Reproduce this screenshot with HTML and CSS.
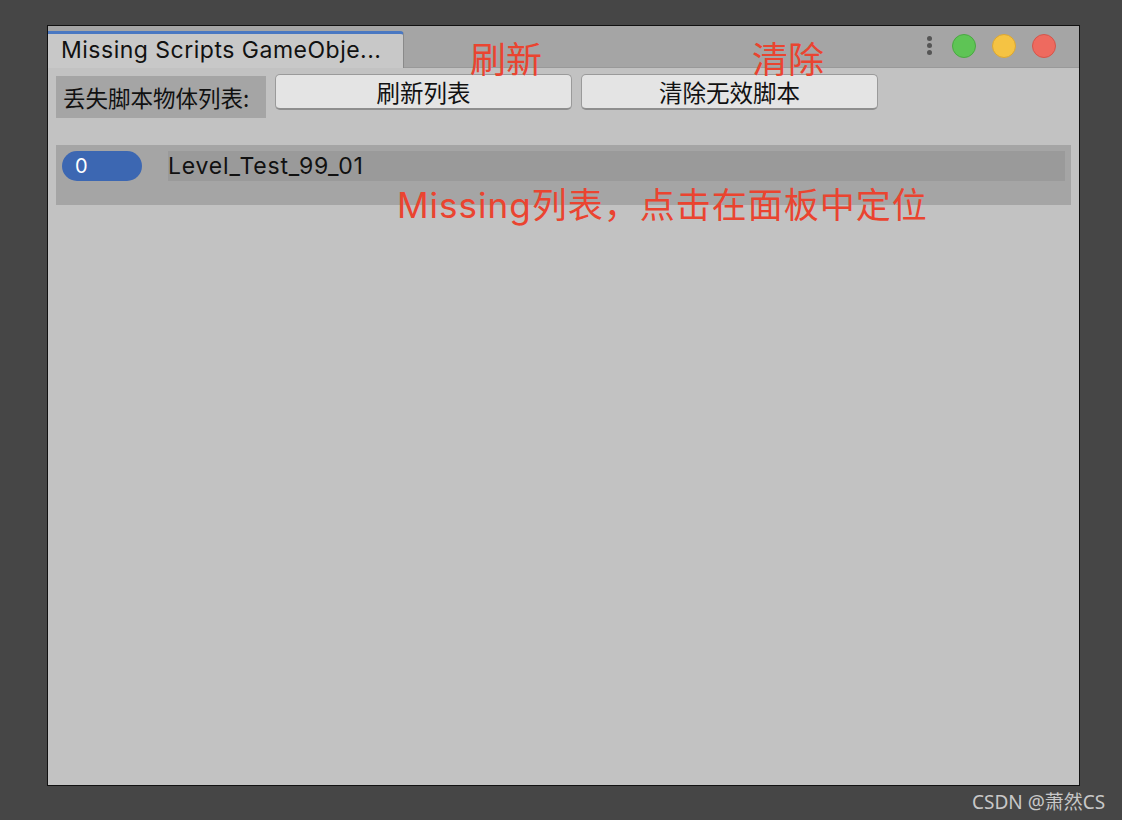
FILE: index.html
```html
<!DOCTYPE html>
<html>
<head>
<meta charset="utf-8">
<link rel="stylesheet" href="styles.css">
</head>
<body>
<div class="stage">
  <div class="window">
    <div class="titlebar">
      <div class="tab">Missing Scripts GameObje...</div>
      <div class="controls">
        <span class="kebab"><i></i><i></i><i></i></span>
        <span class="dot green"></span>
        <span class="dot yellow"></span>
        <span class="dot red"></span>
      </div>
    </div>
    <div class="content">
      <div class="toolbar">
        <div class="label">丢失脚本物体列表:</div>
        <button class="btn">刷新列表</button>
        <button class="btn">清除无效脚本</button>
      </div>
      <div class="list">
        <div class="row">
          <span class="pill">0</span>
          <span class="name">Level_Test_99_01</span>
        </div>
      </div>
    </div>
    <div class="note note-refresh">刷新</div>
    <div class="note note-clear">清除</div>
    <div class="note note-list">Missing列表，点击在面板中定位</div>
  </div>
  <div class="watermark">CSDN @萧然CS</div>
</div>
</body>
</html>
```
FILE: styles.css
```css
html, body {
  margin: 0;
  padding: 0;
  background: #464646;
  font-family: Inter, "Noto Sans CJK SC", sans-serif;
}
.stage {
  width: 1122px;
  height: 820px;
  position: relative;
  padding-top: 25px;
  padding-left: 47px;
  box-sizing: border-box;
}
.window {
  position: relative;
  width: 1033px;
  height: 761px;
  border: 1px solid #111;
  box-sizing: border-box;
  background: #c2c2c2;
  display: flex;
  flex-direction: column;
}
.titlebar {
  height: 42px;
  background: #a5a5a5;
  border-bottom: 1px solid #999;
  box-sizing: border-box;
  display: flex;
  align-items: flex-end;
  justify-content: space-between;
}
.tab {
  width: 356px;
  height: 37px;
  box-sizing: border-box;
  background: #c8c8c8;
  border-top: 3px solid #4a78c2;
  border-right: 1px solid #8a8a8a;
  border-top-right-radius: 4px;
  padding-left: 13px;
  font-size: 23px;
  letter-spacing: 0.5px;
  line-height: 32px;
  color: #111;
  margin-bottom: -1px;
  white-space: nowrap;
}
.controls {
  display: flex;
  align-items: center;
  align-self: center;
  gap: 16px;
  padding-right: 23px;
  margin-top: -2px;
}
.kebab {
  display: flex;
  flex-direction: column;
  gap: 2px;
  margin-right: 4px;
}
.kebab i {
  width: 5px;
  height: 5px;
  border-radius: 50%;
  background: #555;
  display: block;
}
.dot {
  width: 24px;
  height: 24px;
  border-radius: 50%;
  box-sizing: border-box;
}
.green { background: #5ec455; border: 1px solid #4aa842; }
.yellow { background: #f5c343; border: 1px solid #dba633; }
.red { background: #ee6a5f; border: 1px solid #d4554b; }
.content {
  flex: 1;
  padding: 6px 8px 0 8px;
}
.toolbar {
  display: flex;
  align-items: flex-start;
  gap: 9px;
}
.label {
  width: 210px;
  height: 42px;
  margin-top: 2px;
  background: #a5a5a5;
  font-family: "Noto Sans CJK SC", sans-serif;
  font-size: 22.5px;
  line-height: 42px;
  padding-left: 7px;
  box-sizing: border-box;
  color: #111;
  white-space: nowrap;
}
.btn {
  width: 297px;
  height: 36px;
  background: #e4e4e4;
  border: 1px solid #9a9a9a;
  border-bottom: 2px solid #8e8e8e;
  border-radius: 5px;
  font-family: "Noto Sans CJK SC", sans-serif;
  font-size: 23.5px;
  color: #111;
  padding: 0;
  line-height: 30px;
}
.list {
  margin-top: 27px;
  background: #a5a5a5;
  height: 60px;
  padding: 6px;
  box-sizing: border-box;
}
.row {
  display: flex;
  align-items: center;
  gap: 26px;
}
.pill {
  width: 80px;
  height: 30px;
  border-radius: 15px;
  background: #3c67b2;
  color: #fff;
  font-size: 20px;
  line-height: 30px;
  padding-left: 13px;
  box-sizing: border-box;
}
.name {
  flex: 1;
  height: 30px;
  background: #9a9a9a;
  font-size: 23px;
  letter-spacing: 0.8px;
  line-height: 30px;
  color: #111;
}
.note {
  position: absolute;
  color: #ea4430;
  font-family: "Noto Sans CJK SC", sans-serif;
  font-size: 36px;
  line-height: 28px;
  white-space: nowrap;
}
.note-refresh { left: 422px; top: 17px; }
.note-clear { left: 704px; top: 17px; }
.note-list { left: 349px; top: 165px; font-size: 35px; letter-spacing: 1px; font-family: Inter, "Noto Sans CJK SC", sans-serif; }
.watermark {
  position: absolute;
  left: 972px;
  top: 787px;
  color: #c8c8c8;
  font-size: 19px;
  font-family: "Noto Sans", "Noto Sans CJK SC", sans-serif;
}
```
